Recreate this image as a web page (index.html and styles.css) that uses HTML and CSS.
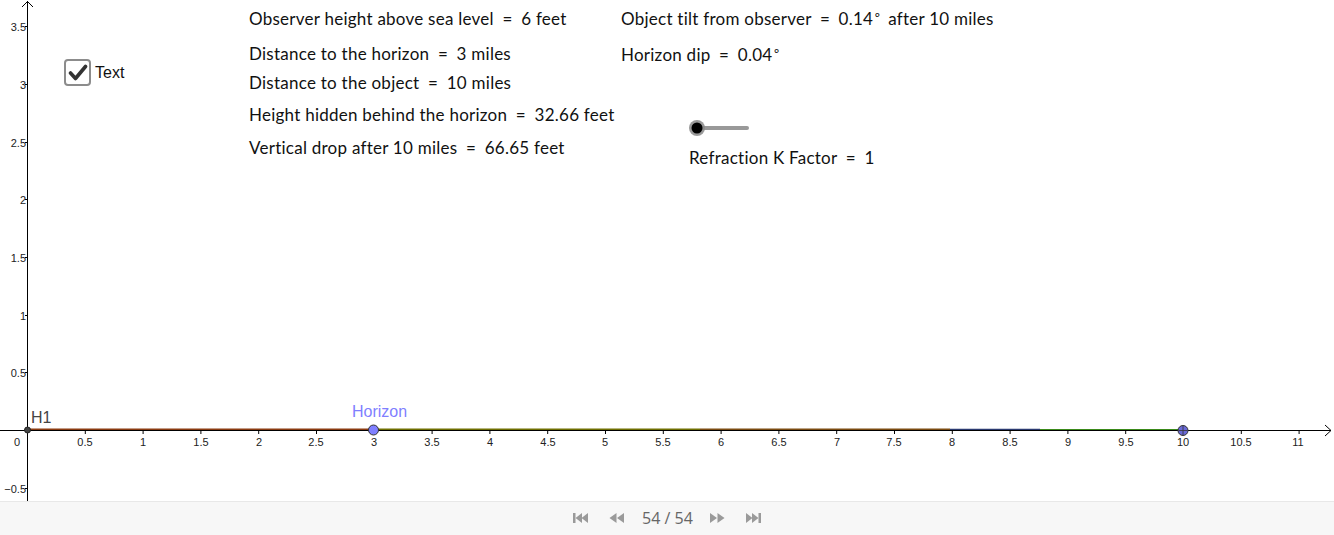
FILE: index.html
```html
<!DOCTYPE html>
<html>
<head>
<meta charset="utf-8">
<link rel="stylesheet" href="styles.css">
</head>
<body>
<div class="applet">
  <div class="graphics">
    <svg class="axes" width="1334" height="501" viewBox="0 0 1334 501">
      <!-- curves along the axis -->
      <g fill="none" stroke-width="1.6">
        <line x1="27" y1="429.3" x2="373" y2="429.3" stroke="#8a3a10"/>
        <line x1="373" y1="429.3" x2="700" y2="429.3" stroke="#6e6e00"/>
        <line x1="700" y1="429.3" x2="950" y2="429.3" stroke="#7a4a10"/>
        <line x1="950" y1="429.6" x2="1040" y2="429.6" stroke="#2a3a70"/>
        <line x1="1040" y1="429.8" x2="1183" y2="429.8" stroke="#3a8a1a"/>
      </g>
      <!-- axes -->
      <g stroke="#000" stroke-width="1" fill="none">
        <line x1="27.5" y1="1" x2="27.5" y2="501"/>
        <polyline points="22,7 27.5,1.5 33,7"/>
        <line x1="0" y1="430.5" x2="1331" y2="430.5"/>
        <polyline points="1325,425 1331,430.5 1325,436"/>
      </g>
      <!-- x ticks -->
      <g stroke="#000" stroke-width="1">
        <line x1="85.3" y1="431" x2="85.3" y2="434"/>
        <line x1="143.1" y1="431" x2="143.1" y2="434"/>
        <line x1="200.9" y1="431" x2="200.9" y2="434"/>
        <line x1="258.7" y1="431" x2="258.7" y2="434"/>
        <line x1="316.5" y1="431" x2="316.5" y2="434"/>
        <line x1="374.3" y1="431" x2="374.3" y2="434"/>
        <line x1="432.1" y1="431" x2="432.1" y2="434"/>
        <line x1="489.9" y1="431" x2="489.9" y2="434"/>
        <line x1="547.7" y1="431" x2="547.7" y2="434"/>
        <line x1="605.5" y1="431" x2="605.5" y2="434"/>
        <line x1="663.3" y1="431" x2="663.3" y2="434"/>
        <line x1="721.1" y1="431" x2="721.1" y2="434"/>
        <line x1="778.9" y1="431" x2="778.9" y2="434"/>
        <line x1="836.7" y1="431" x2="836.7" y2="434"/>
        <line x1="894.5" y1="431" x2="894.5" y2="434"/>
        <line x1="952.3" y1="431" x2="952.3" y2="434"/>
        <line x1="1010.1" y1="431" x2="1010.1" y2="434"/>
        <line x1="1067.9" y1="431" x2="1067.9" y2="434"/>
        <line x1="1125.7" y1="431" x2="1125.7" y2="434"/>
        <line x1="1183.5" y1="431" x2="1183.5" y2="434"/>
        <line x1="1241.3" y1="431" x2="1241.3" y2="434"/>
        <line x1="1299.1" y1="431" x2="1299.1" y2="434"/>
      </g>
      <!-- y ticks -->
      <g stroke="#000" stroke-width="1">
        <line x1="25" y1="26.5" x2="28" y2="26.5"/>
        <line x1="25" y1="84.5" x2="28" y2="84.5"/>
        <line x1="25" y1="142.5" x2="28" y2="142.5"/>
        <line x1="25" y1="199.5" x2="28" y2="199.5"/>
        <line x1="25" y1="257.5" x2="28" y2="257.5"/>
        <line x1="25" y1="315.5" x2="28" y2="315.5"/>
        <line x1="25" y1="372.5" x2="28" y2="372.5"/>
        <line x1="25" y1="488.5" x2="28" y2="488.5"/>
      </g>
      <g class="ticklabels">
        <text x="17" y="446" text-anchor="middle">0</text>
        <text x="85" y="446" text-anchor="middle">0.5</text>
        <text x="143" y="446" text-anchor="middle">1</text>
        <text x="201" y="446" text-anchor="middle">1.5</text>
        <text x="259" y="446" text-anchor="middle">2</text>
        <text x="316" y="446" text-anchor="middle">2.5</text>
        <text x="374" y="446" text-anchor="middle">3</text>
        <text x="432" y="446" text-anchor="middle">3.5</text>
        <text x="490" y="446" text-anchor="middle">4</text>
        <text x="548" y="446" text-anchor="middle">4.5</text>
        <text x="605" y="446" text-anchor="middle">5</text>
        <text x="663" y="446" text-anchor="middle">5.5</text>
        <text x="721" y="446" text-anchor="middle">6</text>
        <text x="779" y="446" text-anchor="middle">6.5</text>
        <text x="837" y="446" text-anchor="middle">7</text>
        <text x="894" y="446" text-anchor="middle">7.5</text>
        <text x="952" y="446" text-anchor="middle">8</text>
        <text x="1010" y="446" text-anchor="middle">8.5</text>
        <text x="1068" y="446" text-anchor="middle">9</text>
        <text x="1126" y="446" text-anchor="middle">9.5</text>
        <text x="1183" y="446" text-anchor="middle">10</text>
        <text x="1241" y="446" text-anchor="middle">10.5</text>
        <text x="1298" y="446" text-anchor="middle">11</text>
        <text x="26" y="31" text-anchor="end">3.5</text>
        <text x="26" y="89" text-anchor="end">3</text>
        <text x="26" y="147" text-anchor="end">2.5</text>
        <text x="26" y="204" text-anchor="end">2</text>
        <text x="26" y="262" text-anchor="end">1.5</text>
        <text x="26" y="320" text-anchor="end">1</text>
        <text x="26" y="377" text-anchor="end">0.5</text>
        <text x="26" y="493" text-anchor="end">&#8722;0.5</text>
      </g>
      <!-- points -->
      <circle cx="27.5" cy="430" r="3" fill="#444" stroke="#222" stroke-width="1"/>
      <text class="ptlabel h1" x="31" y="423">H1</text>
      <circle cx="373.5" cy="430" r="5" fill="#7f7fff" stroke="#333" stroke-width="1"/>
      <text class="ptlabel horizon" x="352" y="417">Horizon</text>
      <circle cx="1183" cy="430.5" r="5" fill="#6a6ad8" stroke="#333" stroke-width="1"/>
      <line x1="1183" y1="426" x2="1183" y2="435" stroke="#333" stroke-width="0.8"/>
      <line x1="1178.5" y1="430.5" x2="1187.5" y2="430.5" stroke="#333" stroke-width="0.8"/>
      <!-- slider -->
      <line x1="697" y1="128" x2="747" y2="128" stroke="#999" stroke-width="4" stroke-linecap="round"/>
      <circle cx="697" cy="128" r="8" fill="#888" opacity="0.85"/>
      <circle cx="697" cy="128" r="5.5" fill="#000"/>
    </svg>

    <label class="checkbox">
      <span class="box">
        <svg width="20" height="18" viewBox="0 0 20 18"><polyline points="2.5,9 7.5,14.5 17.5,2.5" fill="none" stroke="#333" stroke-width="3.6" stroke-linecap="round" stroke-linejoin="round"/></svg>
      </span>
      <span class="cblabel">Text</span>
    </label>

    <div class="txt t1">Observer height above sea level <span class="eq">=</span> 6 feet</div>
    <div class="txt t2">Distance to the horizon <span class="eq">=</span> 3 miles</div>
    <div class="txt t3">Distance to the object <span class="eq">=</span> 10 miles</div>
    <div class="txt t4">Height hidden behind the horizon <span class="eq">=</span> 32.66 feet</div>
    <div class="txt t5">Vertical drop after 10 miles <span class="eq">=</span> 66.65 feet</div>
    <div class="txt t6">Object tilt from observer <span class="eq">=</span> 0.14<sup class="deg">&#8728;</sup> after 10 miles</div>
    <div class="txt t7">Horizon dip <span class="eq">=</span> 0.04<sup class="deg">&#8728;</sup></div>
    <div class="txt t8">Refraction K Factor <span class="eq">=</span> 1</div>
  </div>

  <div class="toolbar">
    <svg class="ic" width="16" height="10" viewBox="0 0 16 10"><rect x="0" y="0" width="2.5" height="10"/><polygon points="2.5,5 9,0 9,10"/><polygon points="8.5,5 15,0 15,10"/></svg>
    <svg class="ic ic2" width="16" height="10" viewBox="0 0 16 10"><polygon points="0.5,5 7.5,0 7.5,10"/><polygon points="8,5 15,0 15,10"/></svg>
    <span class="count">54 / 54</span>
    <svg class="ic ic3" width="16" height="10" viewBox="0 0 16 10"><polygon points="1,0 8,5 1,10"/><polygon points="8.5,0 15.5,5 8.5,10"/></svg>
    <svg class="ic" width="16" height="10" viewBox="0 0 16 10"><polygon points="1,0 7.5,5 1,10"/><polygon points="7,0 13.5,5 7,10"/><rect x="13.5" y="0" width="2.5" height="10"/></svg>
  </div>
</div>
</body>
</html>
```

FILE: styles.css
```css
html, body {
  margin: 0;
  padding: 0;
  background: #fff;
}

.applet {
  width: 1334px;
  height: 535px;
  display: flex;
  flex-direction: column;
  overflow: hidden;
}

.graphics {
  position: relative;
  height: 501px;
  flex: none;
}

.axes {
  display: block;
}

.ticklabels text {
  font-family: "Liberation Sans", Arial, sans-serif;
  font-size: 11px;
  fill: #222;
}

.ptlabel {
  font-family: "Liberation Sans", Arial, sans-serif;
  font-size: 16px;
}

.h1 { fill: #444; }
.horizon { fill: #7f7fff; }

.checkbox {
  position: absolute;
  left: 64px;
  top: 59px;
  display: flex;
  align-items: center;
  gap: 4px;
}

.box {
  width: 23px;
  height: 23px;
  border: 2px solid #8c8c8c;
  border-radius: 4px;
  display: flex;
  align-items: center;
  justify-content: center;
  background: #fff;
}

.cblabel {
  font-family: "Liberation Sans", Arial, sans-serif;
  font-size: 16px;
  color: #111;
}

.txt {
  position: absolute;
  font-family: Lato, "DejaVu Sans", sans-serif;
  font-size: 17px;
  letter-spacing: 0.25px;
  color: #111;
  white-space: nowrap;
  line-height: 20px;
}

.eq {
  margin: 0 4px;
}

.deg {
  font-size: 13px;
  vertical-align: 6px;
  line-height: 0;
  margin-right: 2px;
}

.t1 { left: 249px; top: 9px; }
.t2 { left: 249px; top: 44px; }
.t3 { left: 249px; top: 73px; }
.t4 { left: 249px; top: 105px; }
.t5 { left: 249px; top: 138px; }
.t6 { left: 621px; top: 9px; }
.t7 { left: 621px; top: 45px; }
.t8 { left: 689px; top: 148px; }

.toolbar {
  flex: 1;
  background: #f7f7f7;
  border-top: 1px solid #e8e8e8;
  display: flex;
  align-items: center;
  justify-content: center;
  padding-bottom: 1px;
}

.ic {
  fill: #9a9a9a;
  margin: 0 10px;
}

.ic2 { margin-right: 17px; }
.ic3 { margin-left: 16px; }

.count {
  font-family: "Open Sans", sans-serif;
  font-size: 16px;
  color: #666;
}
```
